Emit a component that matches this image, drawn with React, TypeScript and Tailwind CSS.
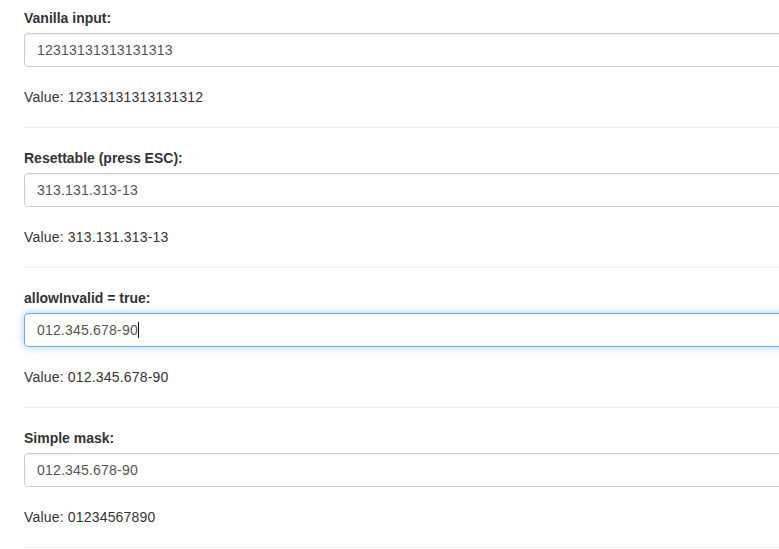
import React from "react";

const fields = [
  { label: "Vanilla input:", input: "12313131313131313", value: "12313131313131312" },
  { label: "Resettable (press ESC):", input: "313.131.313-13", value: "313.131.313-13" },
  { label: "allowInvalid = true:", input: "012.345.678-90", value: "012.345.678-90", focused: true },
  { label: "Simple mask:", input: "012.345.678-90", value: "01234567890" },
];

function Field({ label, input, value, focused }: { label: string; input: string; value: string; focused?: boolean }) {
  return (
    <div>
      <label className="block font-bold text-[14px] leading-[20px] text-[#333] mb-[5px]">{label}</label>
      {focused ? (
        <div className="h-[34px] w-full px-3 flex items-center rounded-[4px] border border-[#66afe9] bg-white text-[14px] tracking-[0.2px] text-[#555] shadow-[inset_0_1px_1px_rgba(0,0,0,0.075),0_0_8px_rgba(102,175,233,0.6)]">
          <span>{input}</span>
          <span className="inline-block w-px h-[16px] bg-[#111]" />
        </div>
      ) : (
        <input
          readOnly
          value={input}
          className="block h-[34px] w-full px-3 rounded-[4px] border border-[#ccc] bg-white text-[14px] tracking-[0.2px] text-[#555] shadow-[inset_0_1px_1px_rgba(0,0,0,0.075)] outline-none"
        />
      )}
      <p className="mt-[20px] text-[14px] leading-[20px] tracking-[0.18px] text-[#333]">Value: {value}</p>
      <hr className="my-[20px] border-0 border-t border-[#eee]" />
    </div>
  );
}

export default function App() {
  return (
    <div className="w-screen h-screen overflow-hidden bg-white font-['Liberation_Sans',Arial,sans-serif]">
      <div className="pt-2 pl-6 w-[1000px]">
        {fields.map((f) => (
          <Field key={f.label} {...f} />
        ))}
      </div>
    </div>
  );
}
